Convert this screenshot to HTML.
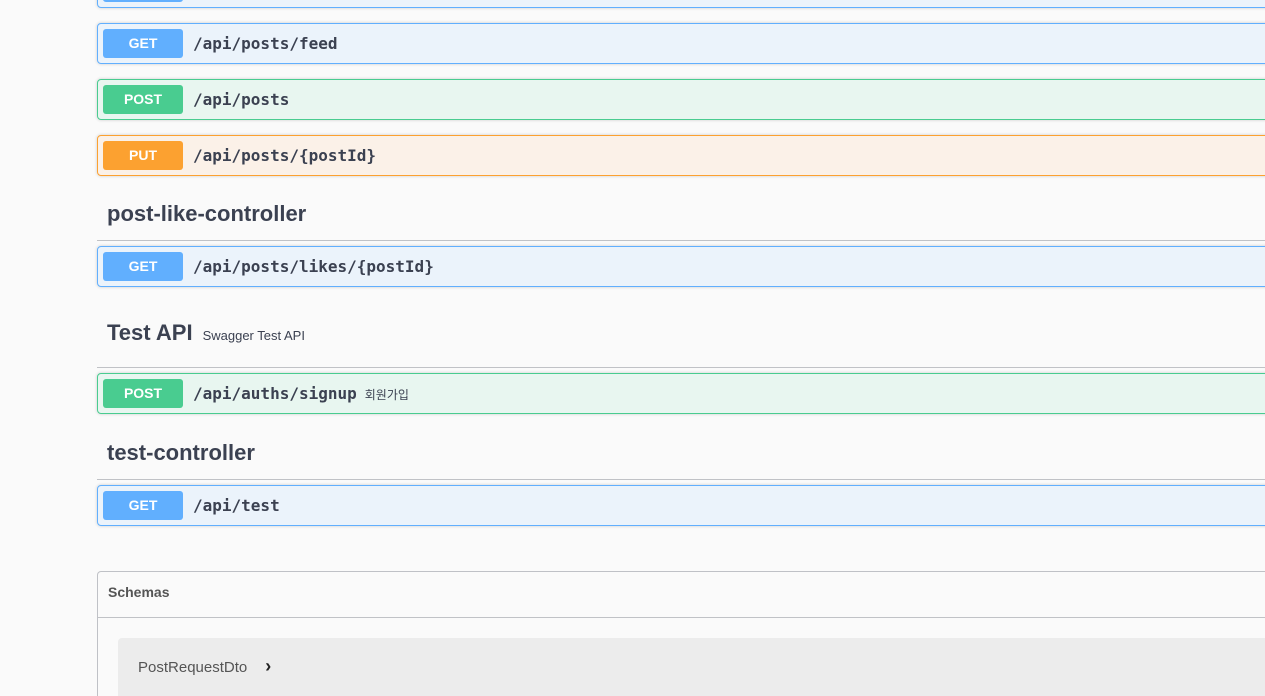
<!DOCTYPE html>
<html><head><meta charset="utf-8"><style>
*{box-sizing:border-box;margin:0;padding:0}
html,body{width:1265px;height:696px;overflow:hidden}
body{background:#fafafa;font-family:"Liberation Sans","Noto Sans CJK KR",sans-serif;color:#3b4151;position:relative}
.op{position:absolute;left:97px;width:1200px;height:41px;border:1px solid;border-radius:4px;box-shadow:0 0 3px rgba(0,0,0,.19)}
.get{background:#ebf3fb;border-color:#61affe}
.post{background:#e8f6f0;border-color:#49cc90}
.put{background:#fbf1e8;border-color:#fca130}
.b{position:absolute;left:5px;top:5px;width:80px;height:29px;border-radius:3px;color:#fff;font-weight:bold;font-size:14px;text-align:center;line-height:29px}
.get .b{background:#61affe}.post .b{background:#49cc90}.put .b{background:#fca130}
.p{position:absolute;left:95px;top:0;line-height:39px;font-family:"DejaVu Sans Mono","Liberation Mono",monospace;font-weight:bold;font-size:16px;color:#3b4151}
.d{font-family:"Liberation Sans","Noto Sans CJK KR",sans-serif;font-weight:normal;font-size:12px;margin-left:8px}
.h{position:absolute;left:97px;width:1200px;border-bottom:1px solid rgba(59,65,81,.3);padding-left:10px;font-size:22px;font-weight:bold}
.h small{font-size:13px;font-weight:normal;margin-left:10px}
</style></head><body>
<div class="op get" style="top:-33px"><div class="b">GET</div></div>
<div class="op get" style="top:23px"><div class="b">GET</div><div class="p">/api/posts/feed</div></div>
<div class="op post" style="top:79px"><div class="b">POST</div><div class="p">/api/posts</div></div>
<div class="op put" style="top:135px"><div class="b">PUT</div><div class="p">/api/posts/{postId}</div></div>
<div class="h" style="top:196px;height:45px;line-height:36px">post-like-controller</div>
<div class="op get" style="top:246px"><div class="b">GET</div><div class="p">/api/posts/likes/{postId}</div></div>
<div class="h" style="top:310px;height:58px;line-height:46px">Test API<small>Swagger Test API</small></div>
<div class="op post" style="top:373px"><div class="b">POST</div><div class="p">/api/auths/signup<span class="d">회원가입</span></div></div>
<div class="h" style="top:433px;height:47px;line-height:40px">test-controller</div>
<div class="op get" style="top:485px"><div class="b">GET</div><div class="p">/api/test</div></div>
<div style="position:absolute;left:97px;top:571px;width:1200px;height:125px;border:1px solid rgba(59,65,81,.3);border-bottom:none;border-radius:4px 4px 0 0;overflow:hidden">
<div style="height:46px;border-bottom:1px solid rgba(59,65,81,.3);padding-left:10px;line-height:40px;font-size:14px;font-weight:bold;color:#555">Schemas</div>
<div style="position:absolute;left:20px;top:66px;width:1180px;height:70px;background:#ececec;border-radius:4px;padding-left:20px;line-height:56px;font-size:15px;color:#555">PostRequestDto<span style="margin-left:18px;color:#222;font-weight:bold;font-size:18px">›</span></div>
</div>
</body></html>
